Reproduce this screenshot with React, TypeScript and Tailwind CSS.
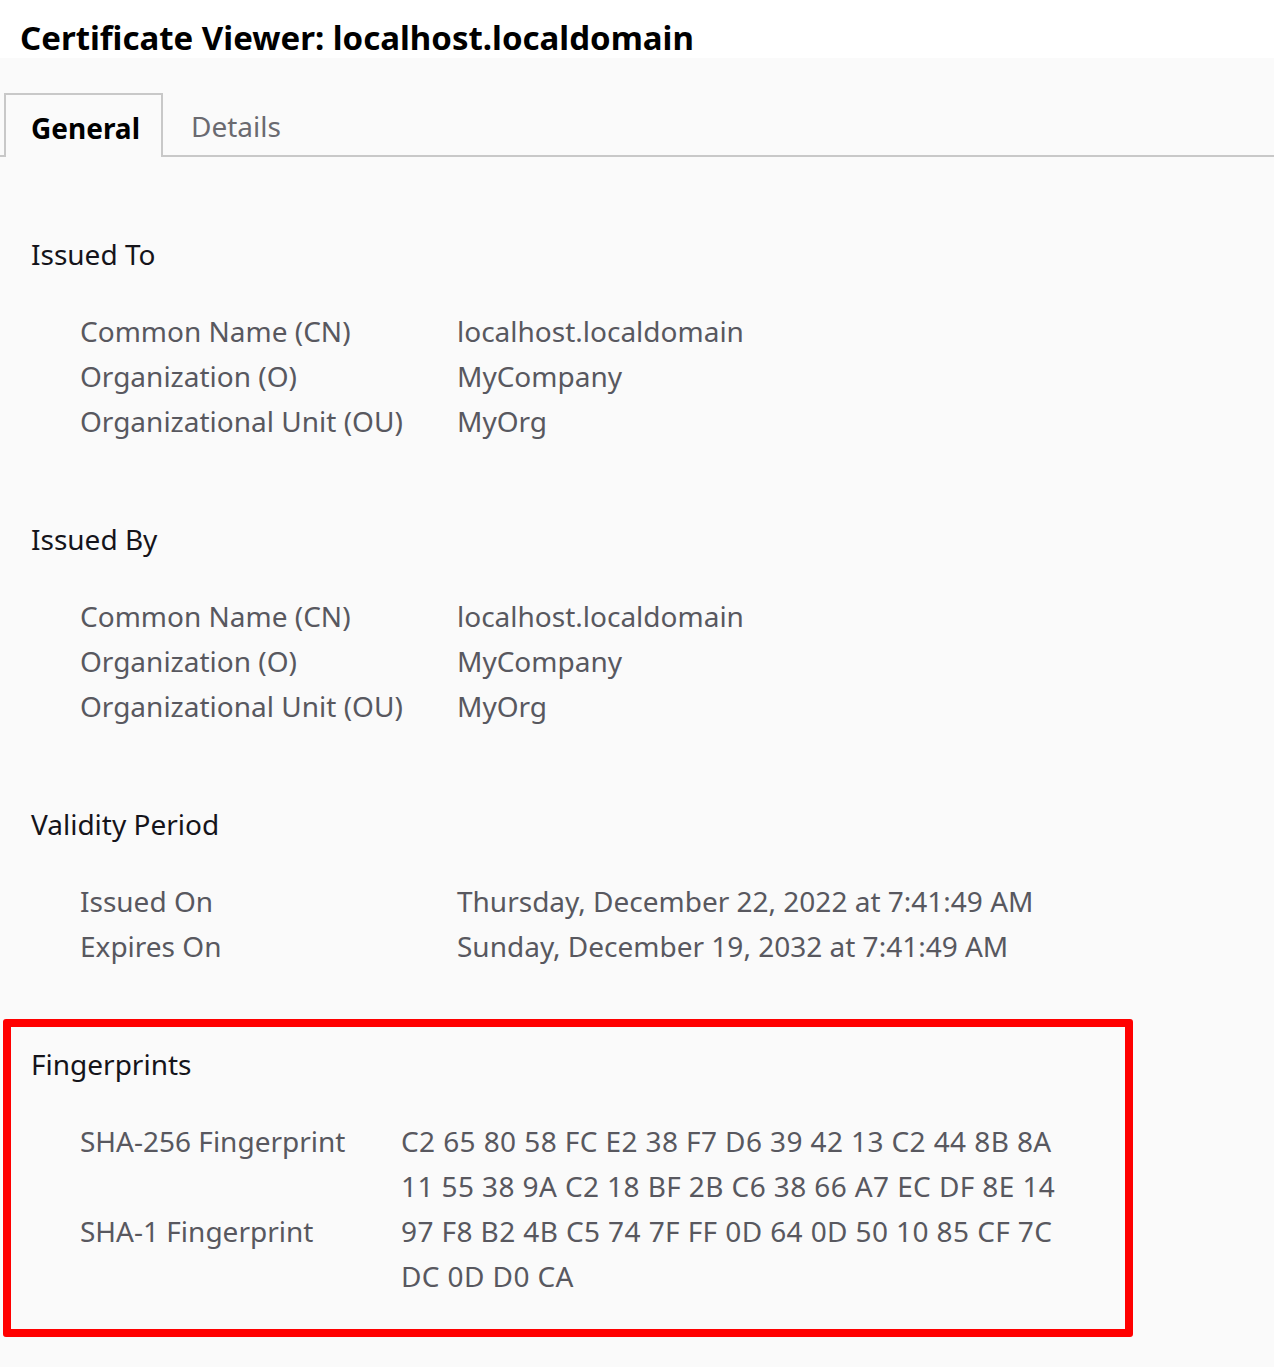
const sections = [
  {
    title: 'Issued To',
    rows: [
      ['Common Name (CN)', ['localhost.localdomain']],
      ['Organization (O)', ['MyCompany']],
      ['Organizational Unit (OU)', ['MyOrg']],
    ],
  },
  {
    title: 'Issued By',
    rows: [
      ['Common Name (CN)', ['localhost.localdomain']],
      ['Organization (O)', ['MyCompany']],
      ['Organizational Unit (OU)', ['MyOrg']],
    ],
  },
  {
    title: 'Validity Period',
    rows: [
      ['Issued On', ['Thursday, December 22, 2022 at 7:41:49 AM']],
      ['Expires On', ['Sunday, December 19, 2032 at 7:41:49 AM']],
    ],
  },
] as { title: string; rows: [string, string[]][] }[];

const fingerprints: [string, string[]][] = [
  ['SHA-256 Fingerprint', ['C2 65 80 58 FC E2 38 F7 D6 39 42 13 C2 44 8B 8A', '11 55 38 9A C2 18 BF 2B C6 38 66 A7 EC DF 8E 14']],
  ['SHA-1 Fingerprint', ['97 F8 B2 4B C5 74 7F FF 0D 64 0D 50 10 85 CF 7C', 'DC 0D D0 CA']],
];

function Rows({ rows, labelWidth, valueClass = '' }: { rows: [string, string[]][]; labelWidth: string; valueClass?: string }) {
  return (
    <div className="mt-[32px] pl-[49px]">
      {rows.map(([label, values]) => (
        <div key={label} className="flex">
          <div className={`${labelWidth} shrink-0 text-[#58585f]`}>{label}</div>
          <div className={`text-[#58585f] ${valueClass}`}>
            {values.map((v) => (
              <div key={v}>{v}</div>
            ))}
          </div>
        </div>
      ))}
    </div>
  );
}

export default function App() {
  return (
    <div className="min-h-[1367px] bg-[#fafafa] text-[28px] leading-[45px] font-['Noto_Sans','Open_Sans',sans-serif] text-[#15141a]">
      {/* Title */}
      <div className="h-[58px] bg-white pl-[20px] pt-[14px]">
        <h1 className="text-[33px] leading-[48px] font-bold text-black">Certificate Viewer: localhost.localdomain</h1>
      </div>

      {/* Tabs */}
      <div className="mt-[35px] flex items-end border-b-2 border-[#c8c8c8] pl-[4px]">
        <div className="-mb-[2px] h-[64px] w-[159px] border-2 border-b-0 border-[#c8c8c8] bg-[#fafafa] pl-[25px] pt-[11px] font-bold text-black">
          General
        </div>
        <div className="h-[62px] pl-[28px] pt-[11px] text-[#6a6a70]">Details</div>
      </div>

      <div className="pt-[75px]">
        {sections.map((s) => (
          <div key={s.title} className="mb-[73px] pl-[31px]">
            <div>{s.title}</div>
            <Rows rows={s.rows} labelWidth="w-[377px]" />
          </div>
        ))}

        {/* Fingerprints */}
        <div className="-mt-[23px] ml-[3px] w-[1130px] rounded-[3px] border-[8px] border-[#ff0000] pl-[20px] pt-[15px] pb-[30px]">
          <div>Fingerprints</div>
          <Rows rows={fingerprints} labelWidth="w-[321px]" valueClass="tracking-[0.4px]" />
        </div>
      </div>
    </div>
  );
}
